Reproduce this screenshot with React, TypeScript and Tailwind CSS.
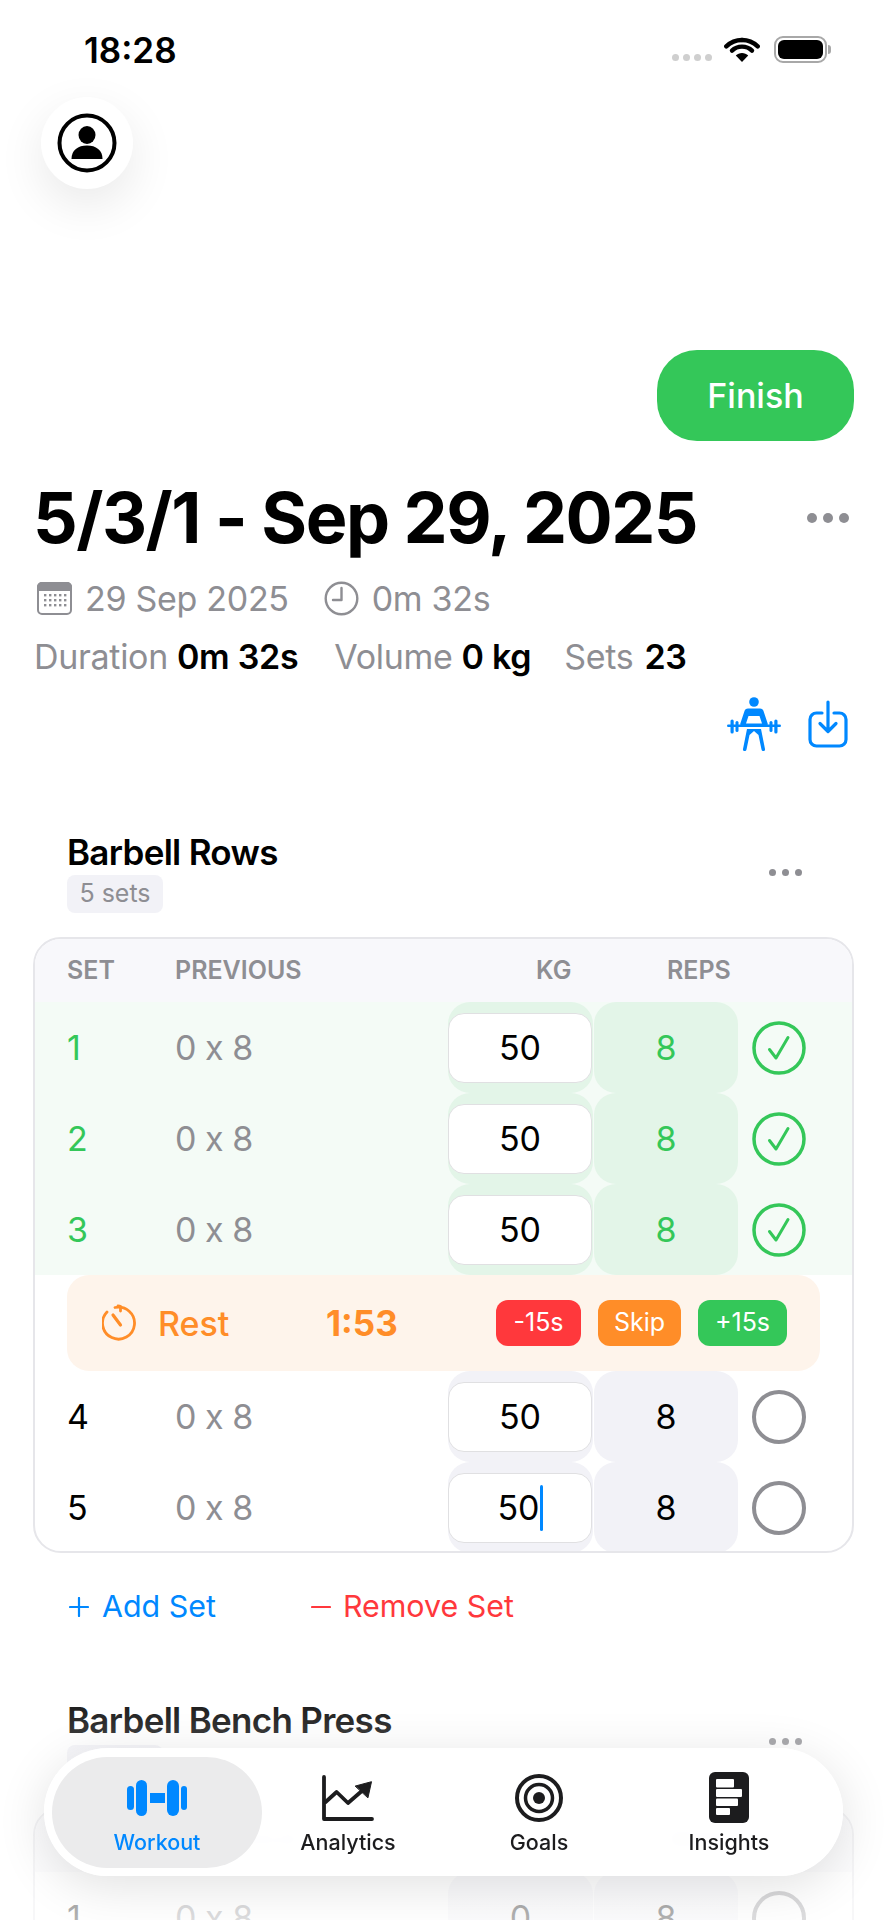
const F = '[font-family:Inter,"Liberation_Sans",sans-serif]';

function Dots({ big }: { big?: boolean }) {
  const d = big ? "h-[10px] w-[10px] bg-[#8e8e93]" : "h-[7px] w-[7px] bg-[#8e8e93]";
  return (
    <div className="flex gap-[6px]">
      <span className={`rounded-full ${d}`} />
      <span className={`rounded-full ${d}`} />
      <span className={`rounded-full ${d}`} />
    </div>
  );
}

function Check() {
  return (
    <svg width="54" height="54" viewBox="0 0 54 54" fill="none">
      <circle cx="27" cy="27" r="25" stroke="#34c759" strokeWidth="3.5" />
      <path d="M17.5 28.5 L24 37 L36 16.5" stroke="#34c759" strokeWidth="3" strokeLinecap="round" strokeLinejoin="round" />
    </svg>
  );
}
function Ring() {
  return <div className="h-[54px] w-[54px] rounded-full border-[4px] border-[#8e8e93]" />;
}

function SetRow({ n, done, kg = "50", cursor, plain }: { n: string; done?: boolean; kg?: string; cursor?: boolean; plain?: boolean }) {
  return (
    <div className={`flex h-[91px] items-center pl-[32px] ${done ? "bg-[#f4fbf6]" : ""}`}>
      <div className={`w-[108px] text-[34px] ${done ? "text-[#34c759]" : "text-black"}`}>{n}</div>
      <div className="w-[273px] text-[34px] tracking-[-0.5px] text-[#8e8e93]">0 x 8</div>
      {plain ? (
        <div className="flex h-[91px] w-[145px] items-center justify-center rounded-[22px] bg-[#f2f2f7] text-[34px] text-black">{kg}</div>
      ) : (
        <div className={`flex h-[91px] w-[145px] items-center rounded-[22px] ${done ? "bg-[#e3f5e8]" : "bg-[#f2f2f7]"}`}>
          <div className="flex h-[70px] w-[144px] items-center justify-center rounded-[16px] border border-[#e0e0e2] bg-white text-[34px] text-black">
            <span>{kg}</span>
            {cursor && <span className="h-[46px] w-[3px] rounded-full bg-[#0088ff]" />}
          </div>
        </div>
      )}
      <div className={`ml-[1px] flex h-[91px] w-[144px] items-center justify-center rounded-[22px] text-[34px] ${done ? "bg-[#e3f5e8] text-[#34c759]" : "bg-[#f2f2f7] text-black"}`}>8</div>
      <div className="ml-[14px]">{done ? <Check /> : <Ring />}</div>
    </div>
  );
}

function Head() {
  return (
    <div className="flex h-[63px] items-center bg-[#f8f8fb] pl-[32px] text-[25px] font-semibold text-[#8e8e93]">
      <div className="w-[108px]">SET</div>
      <div className="w-[361px]">PREVIOUS</div>
      <div className="w-[131px]">KG</div>
      <div>REPS</div>
    </div>
  );
}

function Btn({ c, w, t }: { c: string; w: string; t: string }) {
  return <div className={`flex h-[46px] items-center justify-center rounded-[12px] text-[25px] text-white ${c} ${w}`}>{t}</div>;
}

function NavItem({ label, icon, active, w }: { label: string; icon: React.ReactNode; active?: boolean; w: string }) {
  return (
    <div className={`flex h-[111px] flex-col items-center pt-[15px] ${w} ${active ? "rounded-[56px] bg-[#ebebec]" : ""}`}>
      <div className="flex h-[52px] items-center">{icon}</div>
      <div className={`mt-[2px] text-[21.5px] font-medium ${active ? "text-[#0088ff]" : "text-[#1c1c1e]"}`}>{label}</div>
    </div>
  );
}

export default function App() {
  return (
    <div className={`relative h-[1920px] w-[887px] overflow-hidden bg-white ${F}`}>
      {/* Status bar */}
      <div className="flex h-[97px] items-start justify-between pl-[84px] pr-[56px] pt-[29px]">
        <div className="text-[35px] leading-[42px] font-semibold text-black">18:28</div>
        <div className="flex items-center pt-[7px]">
          <div className="mt-[15px] mr-[12px] flex gap-[4px]">
            {[0, 1, 2, 3].map((i) => (
              <span key={i} className="h-[7px] w-[7px] rounded-full bg-[#cfcfcf]" />
            ))}
          </div>
          <svg width="36" height="27" viewBox="0 0 36 27" className="mr-[14px]">
            <path d="M18 4C24 4 29.6 6.4 33.7 10.4" stroke="#000" strokeWidth="4.4" strokeLinecap="round" fill="none" />
            <path d="M18 4C12 4 6.4 6.4 2.3 10.4" stroke="#000" strokeWidth="4.4" strokeLinecap="round" fill="none" />
            <path d="M8 14.6C10.6 12 14.1 10.6 18 10.6S25.4 12 28 14.6" stroke="#000" strokeWidth="4.4" strokeLinecap="round" fill="none" />
            <path d="M18 26L11.8 19.6C13.4 18 15.6 17 18 17S22.6 18 24.2 19.6Z" fill="#000" />
          </svg>
          <div className="flex items-center">
            <div className="flex h-[27px] w-[53px] items-center rounded-[9px] border-[2px] border-[#a8a8a8] p-[2px]">
              <div className="h-full w-full rounded-[6px] bg-black" />
            </div>
            <div className="ml-[1px] h-[9px] w-[3px] rounded-r-full bg-[#a8a8a8]" />
          </div>
        </div>
      </div>

      {/* Profile */}
      <div className="pl-[41px]">
        <div className="flex h-[92px] w-[92px] items-center justify-center rounded-full bg-white shadow-[0_16px_48px_rgba(0,0,0,0.09)]">
          <svg width="60" height="60" viewBox="0 0 60 60">
            <circle cx="30" cy="30" r="27.5" fill="none" stroke="#000" strokeWidth="4" />
            <ellipse cx="30" cy="22" rx="8.5" ry="9" fill="#000" />
            <path d="M14.5 46C14.5 37 21 32.5 30 32.5S45.5 37 45.5 46Z" fill="#000" />
          </svg>
        </div>
      </div>

      {/* Finish */}
      <div className="mt-[161px] flex justify-end pr-[33px]">
        <div className="flex h-[91px] w-[197px] items-center justify-center rounded-[40px] bg-[#34c759] text-[34px] font-medium text-white">Finish</div>
      </div>

      {/* Title */}
      <div className="mt-[39px] flex h-[76px] items-center justify-between pl-[33px] pr-[38px]">
        <div className="text-[70px] leading-[76px] font-bold tracking-[-1.5px] whitespace-nowrap text-black">5/3/1 - Sep 29, 2025</div>
        <Dots big />
      </div>

      {/* Meta */}
      <div className="mt-[20px] flex h-[44px] items-center pl-[37px] text-[34px] tracking-[-0.3px] text-[#8e8e93]">
        <svg width="35" height="33" viewBox="0 0 35 33" className="mr-[13px]">
          <rect x="1" y="1" width="33" height="31" rx="4" fill="#fff" stroke="#8e8e93" strokeWidth="2" />
          <path d="M5 0H30a5 5 0 0 1 5 5V9H0V5a5 5 0 0 1 5-5Z" fill="#8e8e93" />
          {[13, 18, 23].flatMap((y) =>
            [8, 13, 18, 23, 28].map((x) => <rect key={`${x}-${y}`} x={x - 1} y={y - 1} width="2.4" height="2.4" fill="#8e8e93" />)
          )}
        </svg>
        <span>29 Sep 2025</span>
        <svg width="35" height="35" viewBox="0 0 35 35" fill="none" className="ml-[35px] mr-[13px]">
          <circle cx="17.5" cy="17.5" r="15.8" stroke="#8e8e93" strokeWidth="2.4" />
          <path d="M17.5 7V19H9" stroke="#8e8e93" strokeWidth="2.4" strokeLinecap="round" strokeLinejoin="round" />
        </svg>
        <span>0m 32s</span>
      </div>

      {/* Stats */}
      <div className="mt-[14px] flex h-[44px] items-center pl-[34px] text-[34px] tracking-[-0.3px] text-[#8e8e93]">
        <span>Duration</span>
        <span className="ml-[9px] font-semibold text-black">0m 32s</span>
        <span className="ml-[36px]">Volume</span>
        <span className="ml-[9px] font-semibold text-black">0 kg</span>
        <span className="ml-[33px]">Sets</span>
        <span className="ml-[11px] font-semibold text-black">23</span>
      </div>

      {/* Action icons */}
      <div className="mt-[19px] flex h-[54px] items-center justify-end gap-[27px] pr-[39px]">
        <svg width="54" height="54" viewBox="0 0 54 54" fill="#0088ff">
          <circle cx="27" cy="5" r="4.8" />
          <path fillRule="evenodd" d="M21 11.5H33C35 11.5 36 12.5 36.5 14L41 27.5 37.5 29H16.5L13 27.5 17.5 14C18 12.5 19 11.5 21 11.5ZM21.5 19H32.5L35 26.5H19Z" />
          <rect x="0" y="27.5" width="54" height="2.4" rx="1.2" />
          <rect x="3.5" y="22.5" width="3.2" height="14" rx="1.6" />
          <rect x="8.5" y="24" width="3" height="11" rx="1.5" />
          <rect x="42.5" y="24" width="3" height="11" rx="1.5" />
          <rect x="47.3" y="22.5" width="3.2" height="14" rx="1.6" />
          <path d="M20 32H34L38 52C38.5 54.5 35 55 34.5 52.5L31.5 38 27 34 22.5 38 19.5 52.5C19 55 15.5 54.5 16 52Z" />
        </svg>
        <svg width="40" height="48" viewBox="0 0 40 48" fill="none" stroke="#0088ff" strokeWidth="3.2" strokeLinecap="round" strokeLinejoin="round">
          <path d="M14 13H8.5A6.5 6.5 0 0 0 2 19.5V39.5A6.5 6.5 0 0 0 8.5 46H31.5A6.5 6.5 0 0 0 38 39.5V19.5A6.5 6.5 0 0 0 31.5 13H26" />
          <path d="M20 2V31M12 23.5L20 31.5 28 23.5" />
        </svg>
      </div>

      {/* Exercise */}
      <div className="mt-[80px] flex items-center justify-between pl-[67px] pr-[85px]">
        <div>
          <div className="h-[44px] text-[35px] leading-[42px] font-semibold tracking-[-0.7px] whitespace-nowrap text-black">Barbell Rows</div>
          <div className="inline-flex h-[38px] w-[96px] items-center justify-center rounded-[8px] bg-[#f2f2f7] text-[25px] text-[#8e8e93]">5 sets</div>
        </div>
        <Dots />
      </div>

      {/* Card */}
      <div className="mx-[33px] mt-[24px] h-[616px] w-[821px] overflow-hidden rounded-[28px] border-2 border-[#e6e6ea]">
        <Head />
        <SetRow n="1" done />
        <SetRow n="2" done />
        <SetRow n="3" done />
        <div className="mx-[32px] flex h-[96px] items-center rounded-[22px] bg-[#fef4eb] pl-[35px] pr-[33px]">
          <svg width="36" height="38" viewBox="0 0 36 38" fill="none" stroke="#ff8d28" strokeWidth="2.8" strokeLinecap="round">
            <path d="M13 3.5A16 16 0 1 1 5 8" />
            <path d="M16 2C17 2 18 2.2 18.5 2.5V7" />
            <path d="M11 11L18.5 21" strokeWidth="3.2" />
          </svg>
          <div className="ml-[20px] w-[168px] text-[34px] font-medium text-[#ff8d28]">Rest</div>
          <div className="w-[170px] text-[35px] font-bold text-[#ff8d28]">1:53</div>
          <div className="flex gap-[17px]">
            <Btn c="bg-[#ff383c]" w="w-[85px]" t="-15s" />
            <Btn c="bg-[#ff8d28]" w="w-[83px]" t="Skip" />
            <Btn c="bg-[#34c759]" w="w-[89px]" t="+15s" />
          </div>
        </div>
        <SetRow n="4" />
        <SetRow n="5" cursor />
      </div>

      {/* Add / remove */}
      <div className="mt-[34px] flex h-[40px] items-center pl-[69px] text-[30.4px]">
        <svg width="20" height="20" viewBox="0 0 20 20" stroke="#0088ff" strokeWidth="2.2" strokeLinecap="round">
          <path d="M10 1V19M1 10H19" />
        </svg>
        <span className="ml-[13px] text-[#0088ff]">Add Set</span>
        <svg width="20" height="20" viewBox="0 0 20 20" stroke="#ff383c" strokeWidth="2.2" strokeLinecap="round" className="ml-[95px]">
          <path d="M1 10H19" />
        </svg>
        <span className="ml-[12px] text-[#ff383c]">Remove Set</span>
      </div>

      {/* Second exercise */}
      <div className="mt-[71px] flex justify-between pl-[67px] pr-[85px]">
        <div>
          <div className="h-[44px] text-[35px] leading-[44px] font-semibold tracking-[-0.7px] whitespace-nowrap text-black">Barbell Bench Press</div>
          <div className="mt-[3px] h-[38px] w-[96px] rounded-[8px] bg-[#f2f2f7]" />
        </div>
        <div className="mt-[40px]">
          <Dots />
        </div>
      </div>
      <div className="mx-[33px] mt-[24px] h-[400px] w-[821px] overflow-hidden rounded-[28px] border-2 border-[#e6e6ea]">
        <Head />
        <SetRow n="1" kg="0" plain />
      </div>

      {/* Fade */}
      <div className="pointer-events-none absolute inset-x-0 bottom-0 h-[220px] bg-gradient-to-b from-white/10 via-white/50 to-white/70" />

      {/* Tab bar */}
      <div className="absolute bottom-[44px] left-[44px] flex h-[128px] w-[799px] items-center rounded-[64px] bg-white/95 pl-[8px] shadow-[0_10px_50px_rgba(0,0,0,0.12)] backdrop-blur-sm">
        <NavItem
          w="w-[210px]"
          active
          label="Workout"
          icon={
            <svg width="60" height="36" viewBox="0 0 60 36" fill="#0088ff">
              <rect x="0" y="6" width="7" height="24" rx="3.5" />
              <rect x="9" y="0" width="11" height="36" rx="5.5" />
              <rect x="23" y="13" width="15" height="10" />
              <rect x="40" y="0" width="12" height="36" rx="6" />
              <rect x="54" y="6" width="6" height="24" rx="3" />
            </svg>
          }
        />
        <NavItem
          w="w-[130px] ml-[21px]"
          label="Analytics"
          icon={
            <svg width="52" height="46" viewBox="0 0 52 46" fill="none" stroke="#1c1c1e" strokeWidth="3.8" strokeLinecap="round" strokeLinejoin="round">
              <path d="M2 2V44H50" />
              <path d="M3.6 27L14.6 17 26 28 41 15" />
              <path d="M33.5 11L49.5 6.7 46 22.5Z" fill="#1c1c1e" strokeWidth="1" />
            </svg>
          }
        />
        <NavItem
          w="w-[130px] ml-[61px]"
          label="Goals"
          icon={
            <svg width="48" height="48" viewBox="0 0 48 48" fill="none" stroke="#1c1c1e">
              <circle cx="24" cy="24" r="22" strokeWidth="4" />
              <circle cx="24" cy="24" r="13.5" strokeWidth="3.5" />
              <circle cx="24" cy="24" r="6" fill="#1c1c1e" stroke="none" />
            </svg>
          }
        />
        <NavItem
          w="w-[130px] ml-[60px]"
          label="Insights"
          icon={
            <svg width="40" height="51" viewBox="0 0 40 51">
              <rect width="40" height="51" rx="6" fill="#1c1c1e" />
              <rect x="7" y="7" width="18" height="8.5" rx="1" fill="#fff" />
              <rect x="7" y="17" width="26" height="8" rx="1" fill="#fff" />
              <rect x="7" y="26.5" width="22" height="7.5" rx="1" fill="#fff" />
              <rect x="7" y="36" width="14" height="7" rx="1" fill="#fff" />
            </svg>
          }
        />
      </div>
    </div>
  );
}
